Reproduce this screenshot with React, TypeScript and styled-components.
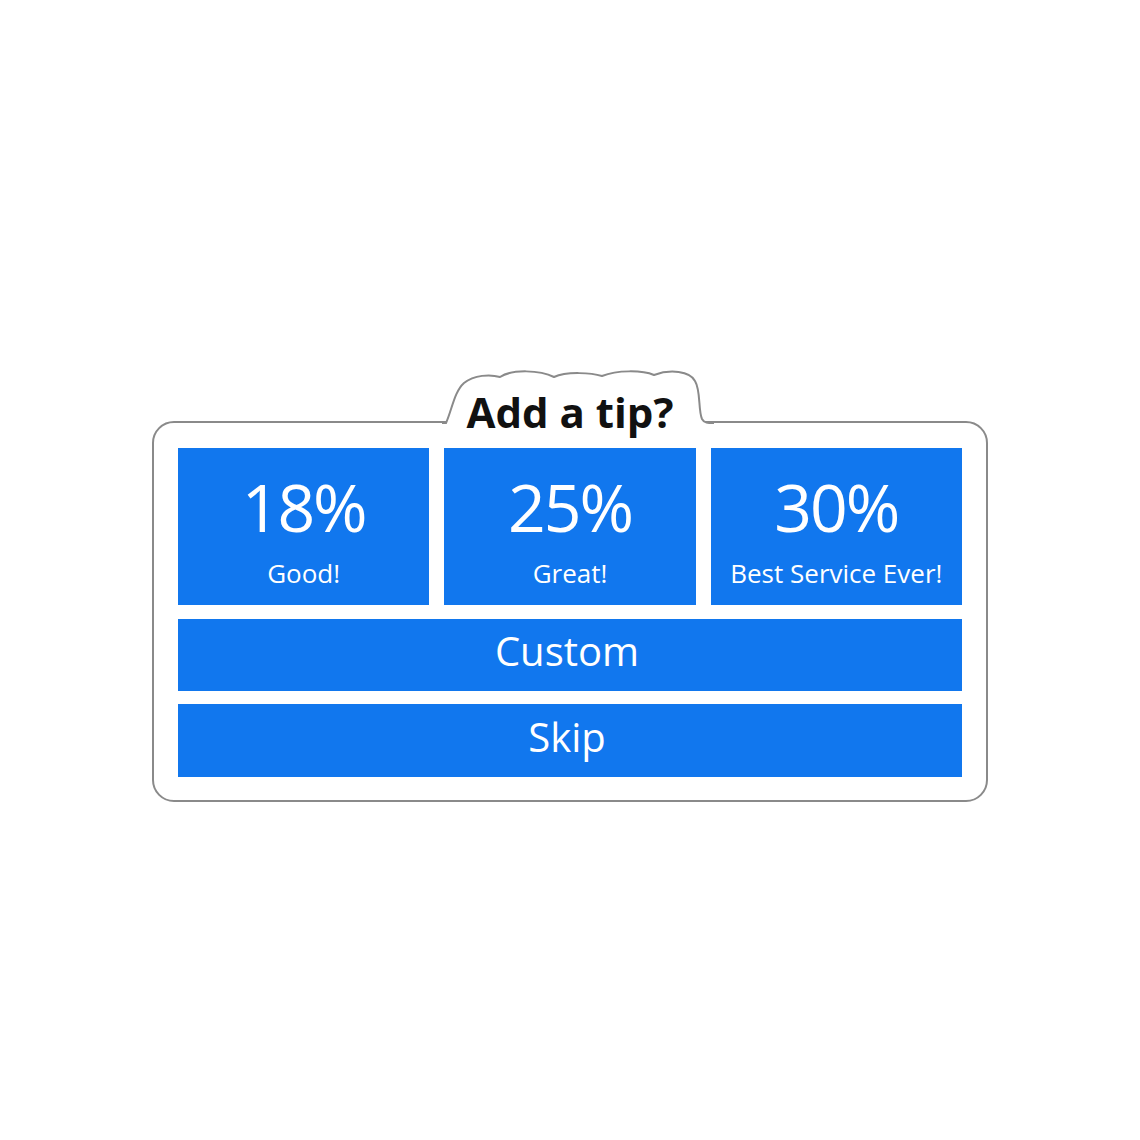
import React from "react";
import styled, { createGlobalStyle } from "styled-components";

const Global = createGlobalStyle`
  html, body { margin: 0; padding: 0; background: #ffffff; }
  body { font-family: "Open Sans", "Noto Sans", sans-serif; }
`;

const Page = styled.div`
  width: 1140px;
  height: 1140px;
  box-sizing: border-box;
  padding: 421px 0 0 152px;
  background: #ffffff;
`;

const Sticker = styled.div`
  position: relative;
  width: 836px;
  height: 381px;
  box-sizing: border-box;
  border: 2px solid #8a8a8a;
  border-radius: 22px;
  background: #ffffff;
  padding: 25px 24px 23px 24px;
  display: flex;
  flex-direction: column;
  gap: 14px;
`;

const Tab = styled.div`
  position: absolute;
  left: 288px;
  top: -57px;
  width: 272px;
  height: 62px;
`;

const TabShape = styled.svg`
  position: absolute;
  inset: 0;
`;

const Title = styled.div`
  position: relative;
  padding: 20px 16px 0 0;
  text-align: center;
  font-family: "Open Sans", "Noto Sans", sans-serif;
  font-weight: 700;
  font-size: 42px;
  line-height: 52px;
  color: #111111;
  letter-spacing: 0px;
`;

const Options = styled.div`
  display: grid;
  grid-template-columns: repeat(3, 1fr);
  gap: 15px;
  height: 157px;
`;

const Option = styled.button`
  all: unset;
  box-sizing: border-box;
  background: #1177ee;
  color: #ffffff;
  display: flex;
  flex-direction: column;
  align-items: center;
  padding-top: 25px;
  font-family: "Open Sans", "Noto Sans", sans-serif;
`;

const Percent = styled.div`
  font-size: 66px;
  line-height: 66px;
  letter-spacing: -2px;
`;

const Label = styled.div`
  margin-top: 21px;
  font-size: 26px;
  line-height: 26px;
  letter-spacing: 0px;
`;

const Wide = styled.button<{ $h: number }>`
  all: unset;
  box-sizing: border-box;
  height: ${(p) => p.$h}px;
  background: #1177ee;
  color: #ffffff;
  display: flex;
  align-items: center;
  justify-content: center;
  padding-bottom: 8px;
  padding-right: 6px;
  font-family: "Open Sans", "Noto Sans", sans-serif;
  font-size: 40px;
  line-height: 40px;
  letter-spacing: 0px;
`;

const Rows = styled.div`
  display: flex;
  flex-direction: column;
  gap: 13px;
`;

const options = [
  { pct: "18%", label: "Good!" },
  { pct: "25%", label: "Great!" },
  { pct: "30%", label: "Best Service Ever!" },
];

const tabPath =
  "M0,57 L4,57 C10,44 12,26 22,17 C32,9 48,8 58,11 C70,3 98,4 112,11 C125,5 150,7 160,10 C175,4 200,4 212,9 C228,3 248,5 253,15 C259,25 256,44 260,53 C262,57 266,57 272,57";

export default function App() {
  return (
    <>
      <Global />
      <Page>
        <Sticker>
          <Tab>
            <TabShape width="272" height="62" viewBox="0 0 272 62">
              <path d={`${tabPath} L272,62 L0,62 Z`} fill="#ffffff" stroke="none" />
              <path d={tabPath} fill="none" stroke="#8a8a8a" strokeWidth="2" />
            </TabShape>
            <Title>Add a tip?</Title>
          </Tab>
          <Options>
            {options.map((o) => (
              <Option key={o.pct}>
                <Percent>{o.pct}</Percent>
                <Label>{o.label}</Label>
              </Option>
            ))}
          </Options>
          <Rows>
            <Wide $h={72}>Custom</Wide>
            <Wide $h={73}>Skip</Wide>
          </Rows>
        </Sticker>
      </Page>
    </>
  );
}
